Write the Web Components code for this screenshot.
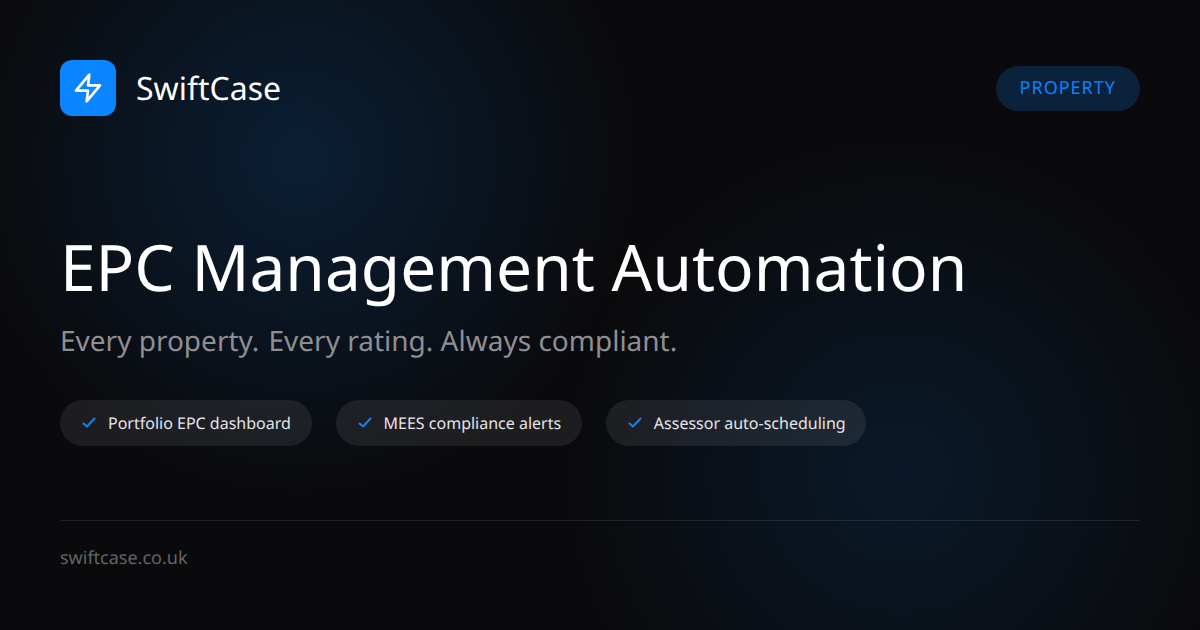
<!DOCTYPE html>
<html lang="en">
<head>
<meta charset="utf-8">
<title>SwiftCase</title>
<style>
  html, body { margin: 0; padding: 0; width: 1200px; height: 630px; overflow: hidden; background: #0a0a0c; }
</style>
</head>
<body>
<og-card>
  <brand-mark slot="brand">SwiftCase</brand-mark>
  <tag-pill slot="tag">PROPERTY</tag-pill>
  <span slot="title">EPC Management Automation</span>
  <span slot="subtitle">Every property. <span style="margin-left: 2px">Every rating. Always compliant.</span></span>
  <check-pill slot="features">Portfolio EPC dashboard</check-pill>
  <check-pill slot="features">MEES compliance alerts</check-pill>
  <check-pill slot="features">Assessor auto-scheduling</check-pill>
  <span slot="url">swiftcase.co.uk</span>
</og-card>
<script>
class OgCard extends HTMLElement {
    constructor() {
        super();
        this.attachShadow({ mode: 'open' });
        this.shadowRoot.innerHTML = `
        <style>
            :host {
              display: flex;
              flex-direction: column;
              box-sizing: border-box;
              width: 1200px;
              height: 630px;
              padding: 60px 60px 0;
              font-family: "Noto Sans", sans-serif;
              color: #fff;
              text-rendering: geometricPrecision;
              background:
                radial-gradient(circle at 25% 25%, rgba(10,132,255,0.17), rgba(10,132,255,0) 33%),
                radial-gradient(circle at 75% 75%, rgba(10,132,255,0.12), rgba(10,132,255,0) 33%),
                #0a0a0c;
            }
            header { display: flex; justify-content: space-between; align-items: center; height: 56px; }
            main { display: flex; flex-direction: column; padding-top: 107px; }
            .title { font-size: 64px; line-height: 88px; font-weight: 400; }
            .subtitle { font-size: 28px; line-height: 38px; color: #8e8e93; margin-top: 11px; }
            .features { display: flex; gap: 24px; margin-top: 40px; }
            footer { margin-top: 74px; border-top: 1px solid rgba(255,255,255,0.1); padding-top: 25px; font-size: 18px; line-height: 25px; color: #636366; }
        </style>
        <header><slot name="brand"></slot><slot name="tag"></slot></header>
        <main>
          <div class="title"><slot name="title"></slot></div>
          <div class="subtitle"><slot name="subtitle"></slot></div>
          <div class="features"><slot name="features"></slot></div>
        </main>
        <footer><slot name="url"></slot></footer>
    `;
    }
}

class BrandMark extends HTMLElement {
    constructor() {
        super();
        this.attachShadow({ mode: 'open' });
        this.shadowRoot.innerHTML = `
        <style>
            :host { display: flex; align-items: center; gap: 20px; font-size: 32px; font-weight: 400; color: #fff; }
            .logo { width: 56px; height: 56px; border-radius: 12px; background: #0a84ff; display: flex; align-items: center; justify-content: center; }
        </style>
        <div class="logo">
          <svg width="32" height="32" viewBox="0 0 24 24" fill="none" stroke="#fff" stroke-width="2" stroke-linecap="round" stroke-linejoin="round">
            <path d="M13 2 3 14h9l-1 8 10-12h-9l1-8z"/>
          </svg>
        </div>
        <slot></slot>
    `;
    }
}

class TagPill extends HTMLElement {
    constructor() {
        super();
        this.attachShadow({ mode: 'open' });
        this.shadowRoot.innerHTML = `
        <style>
            :host { display: block; padding: 10px 24px; border-radius: 100px; background: rgba(10,132,255,0.2); color: #0a84ff; font-size: 18px; line-height: 25px; font-weight: 400; letter-spacing: 1px; }
        </style>
        <slot></slot>
    `;
    }
}

class CheckPill extends HTMLElement {
    constructor() {
        super();
        this.attachShadow({ mode: 'open' });
        this.shadowRoot.innerHTML = `
        <style>
            :host { display: flex; align-items: center; gap: 12px; height: 46px; padding: 0 20.7px 0 20px; border-radius: 100px; background: rgba(255,255,255,0.08); color: #e5e5ea; font-size: 16px; }
            svg { display: block; }
        </style>
        <svg width="16" height="16" viewBox="0 0 16 16" fill="none" stroke="#0a84ff" stroke-width="2" stroke-linecap="round" stroke-linejoin="round">
          <path d="M3.5 8.5 7 11.5 14.5 3.5"/>
        </svg>
        <slot></slot>
    `;
    }
}

customElements.define('og-card', OgCard);
customElements.define('brand-mark', BrandMark);
customElements.define('tag-pill', TagPill);
customElements.define('check-pill', CheckPill);
</script>
</body>
</html>
